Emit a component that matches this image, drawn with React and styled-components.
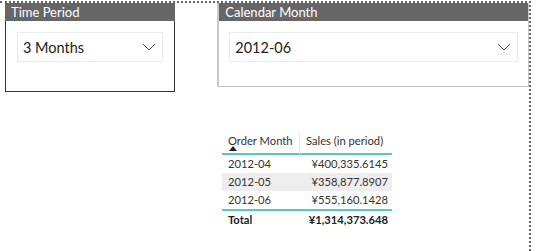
import styled, { createGlobalStyle } from "styled-components"

const GlobalStyle = createGlobalStyle`
  html, body {
    margin: 0;
    padding: 0;
    background: #fff;
  }
  body {
    font-family: "Segoe UI", Lato, "Open Sans", sans-serif;
    color: #333;
  }
`

const Canvas = styled.div`
  width: 544px;
  height: 251px;
  overflow: hidden;
`

const Frame = styled.div`
  margin-top: 1px;
  width: 531px;
  height: 250px;
  box-sizing: border-box;
  border-top: 2px dotted #666;
  border-right: 2px dotted #666;
  display: flex;
  flex-direction: column;
`

const SlicerRow = styled.div`
  display: flex;
  align-items: flex-start;
  padding-left: 5px;
  gap: 42px;
`

const Slicer = styled.div`
  box-sizing: border-box;
  width: ${(p) => p.$width}px;
  height: ${(p) => p.$height}px;
  background: #fff;
  border: 1px solid ${(p) => (p.$active ? "#333" : "#c8c8c8")};
  border-left-width: ${(p) => (p.$active ? 1 : 2)}px;
  border-top: none;
  display: flex;
  flex-direction: column;
`

const SlicerHeader = styled.div`
  height: 18px;
  background: #666;
  color: #fff;
  font-size: 13px;
  line-height: 18px;
  padding-left: 6px;
  margin: 0 ${(p) => (p.$active ? -1 : 0)}px;
`

const Dropdown = styled.div`
  margin: 11px ${(p) => p.$side}px 0;
  height: 30px;
  box-sizing: border-box;
  border: 1px solid #ececec;
  display: flex;
  align-items: center;
  justify-content: space-between;
  padding: 0 6px 0 5px;
  font-size: 14.5px;
  color: #222;
`

const Chevron = () => (
  <svg width="14" height="8" viewBox="0 0 14 8">
    <path d="M1 1 L7 7 L13 1" fill="none" stroke="#555" strokeWidth="1" />
  </svg>
)

const Table = styled.div`
  margin: 40px 0 0 222px;
  width: 170px;
  display: grid;
  grid-template-columns: 78px 92px;
  font-size: 11.2px;
  color: #333;
`

const HeadCell = styled.div`
  position: relative;
  height: 21px;
  line-height: 18px;
  padding: 0 ${(p) => (p.$right ? 4 : 6)}px 0 6px;
  border-right: ${(p) => (p.$divider ? "1px solid #eaeaea" : "none")};
  border-bottom: 2px solid #58c9c2;
  white-space: nowrap;
`

const SortArrow = styled.span`
  position: absolute;
  left: 7px;
  top: 14px;
  width: 0;
  height: 0;
  border-left: 4px solid transparent;
  border-right: 4px solid transparent;
  border-bottom: 5px solid #222;
`

const Cell = styled.div`
  height: 18px;
  line-height: 18px;
  padding: 0 ${(p) => (p.$right ? 4 : 0)}px 0 ${(p) => (p.$right ? 0 : 6)}px;
  text-align: ${(p) => (p.$right ? "right" : "left")};
  background: ${(p) => (p.$shaded ? "#eeeeee" : "transparent")};
  white-space: nowrap;
`

const TotalCell = styled(Cell)`
  font-weight: bold;
  color: #222;
  border-top: 2px solid #58c9c2;
`

const rows = [
  { month: "2012-04", sales: "¥400,335.6145" },
  { month: "2012-05", sales: "¥358,877.8907" },
  { month: "2012-06", sales: "¥555,160.1428" },
]

const App = () => {
  return (
    <Canvas>
      <GlobalStyle />
      <Frame>
        <SlicerRow>
          <Slicer $active $width={171} $height={89}>
            <SlicerHeader $active>Time Period</SlicerHeader>
            <Dropdown $side={11}>
              <span>3 Months</span>
              <Chevron />
            </Dropdown>
          </Slicer>
          <Slicer $width={313} $height={84}>
            <SlicerHeader>Calendar Month</SlicerHeader>
            <Dropdown $side={10}>
              <span>2012-06</span>
              <Chevron />
            </Dropdown>
          </Slicer>
        </SlicerRow>
        <Table>
          <HeadCell $divider>
            Order Month
            <SortArrow />
          </HeadCell>
          <HeadCell $right>Sales (in period)</HeadCell>
          {rows.map((r, i) => [
            <Cell key={r.month} $shaded={i === 1}>{r.month}</Cell>,
            <Cell key={r.sales} $right $shaded={i === 1}>{r.sales}</Cell>,
          ])}
          <TotalCell>Total</TotalCell>
          <TotalCell $right>¥1,314,373.648</TotalCell>
        </Table>
      </Frame>
    </Canvas>
  )
}

export default App
